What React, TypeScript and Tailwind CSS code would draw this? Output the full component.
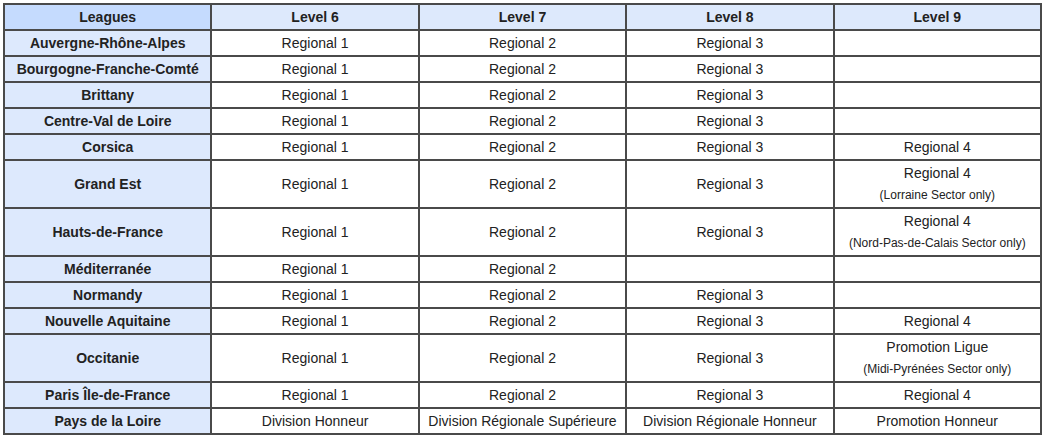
const levels = ["Level 6", "Level 7", "Level 8", "Level 9"];

type Row = {
  league: string;
  cells: string[];
  note?: string;
};

const rows: Row[] = [
  { league: "Auvergne-Rhône-Alpes", cells: ["Regional 1", "Regional 2", "Regional 3", ""] },
  { league: "Bourgogne-Franche-Comté", cells: ["Regional 1", "Regional 2", "Regional 3", ""] },
  { league: "Brittany", cells: ["Regional 1", "Regional 2", "Regional 3", ""] },
  { league: "Centre-Val de Loire", cells: ["Regional 1", "Regional 2", "Regional 3", ""] },
  { league: "Corsica", cells: ["Regional 1", "Regional 2", "Regional 3", "Regional 4"] },
  { league: "Grand Est", cells: ["Regional 1", "Regional 2", "Regional 3", "Regional 4"], note: "(Lorraine Sector only)" },
  { league: "Hauts-de-France", cells: ["Regional 1", "Regional 2", "Regional 3", "Regional 4"], note: "(Nord-Pas-de-Calais Sector only)" },
  { league: "Méditerranée", cells: ["Regional 1", "Regional 2", "", ""] },
  { league: "Normandy", cells: ["Regional 1", "Regional 2", "Regional 3", ""] },
  { league: "Nouvelle Aquitaine", cells: ["Regional 1", "Regional 2", "Regional 3", "Regional 4"] },
  { league: "Occitanie", cells: ["Regional 1", "Regional 2", "Regional 3", "Promotion Ligue"], note: "(Midi-Pyrénées Sector only)" },
  { league: "Paris Île-de-France", cells: ["Regional 1", "Regional 2", "Regional 3", "Regional 4"] },
  { league: "Pays de la Loire", cells: ["Division Honneur", "Division Régionale Supérieure", "Division Régionale Honneur", "Promotion Honneur"] },
];

export default function App() {
  return (
    <div className="min-h-screen bg-white pl-[3px] pt-[3px] font-['Liberation_Sans',Arial,sans-serif] text-[#222]">
      <table className="w-[1039px] table-fixed border-collapse border-2 border-[#4a4a4a] text-[14px]">
        <thead>
          <tr className="h-[26px]">
            <th className="border-2 border-[#4a4a4a] bg-[#c5dbfe] text-[14px] font-bold">Leagues</th>
            {levels.map((l) => (
              <th key={l} className="border-2 border-[#4a4a4a] bg-[#dde9fc] text-[14px] font-bold">
                {l}
              </th>
            ))}
          </tr>
        </thead>
        <tbody>
          {rows.map((row) => (
            <tr key={row.league} className={row.note ? "h-[48px]" : "h-[26px]"}>
              <td className="border-2 border-[#4a4a4a] bg-[#dde9fd] text-center text-[14px] font-bold leading-[20px]">
                {row.league}
              </td>
              {row.cells.map((c, i) => (
                <td key={i} className="border-2 border-[#4a4a4a] bg-white text-center leading-[20px]">
                  {row.note && i === 3 ? (
                    <div className="flex flex-col items-center">
                      <span className="leading-[22px]">{c}</span>
                      <span className="text-[12px] leading-[22px]">{row.note}</span>
                    </div>
                  ) : (
                    c
                  )}
                </td>
              ))}
            </tr>
          ))}
        </tbody>
      </table>
    </div>
  );
}
